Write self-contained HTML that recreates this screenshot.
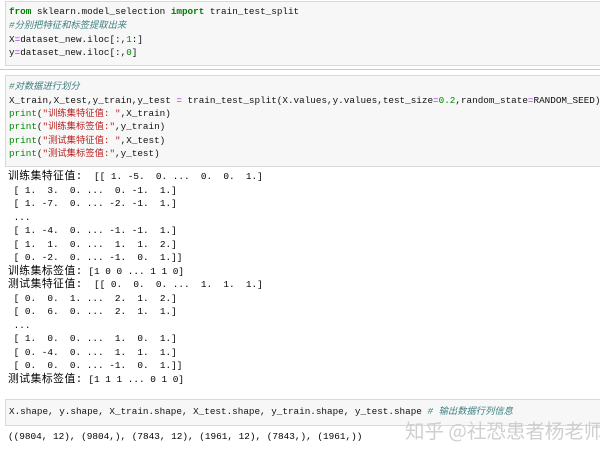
<!DOCTYPE html>
<html><head><meta charset="utf-8"><style>
body{margin:0;width:600px;height:455px;background:#fff;position:relative;overflow:hidden;font-family:"Liberation Mono","Noto Sans CJK SC",monospace;font-size:9.3px;color:#111}
.box{position:absolute;left:5px;right:-2px;background:#f7f7f7;border:1px solid #d9d9d9}
.l{position:absolute;left:9px;white-space:pre;line-height:13px}
.o{position:absolute;left:8px;white-space:pre;line-height:13px;height:13px;font-size:9.4px;color:#000}
.o b{font-weight:normal;font-size:10.8px;letter-spacing:0.5px;line-height:13px}
.k{color:#008000;font-weight:bold}.c{color:#408080;font-style:italic}.s{color:#ba2121}.n{color:#080}.g{color:#a2f}
</style></head><body>
<div class="box" style="top:1px;height:63px"></div>
<div style="position:absolute;left:0;right:0;top:69px;border-top:1px solid #ccc"></div>
<div class="box" style="top:75px;height:90px"></div>
<div class="l" style="top:5px"><span class="k">from</span> sklearn.model_selection <span class="k">import</span> train_test_split</div>
<div class="l" style="top:19px"><span class="c">#分别把特征和标签提取出来</span></div>
<div class="l" style="top:33px">X<span class="g">=</span>dataset_new.iloc[:,<span class="n">1</span>:]</div>
<div class="l" style="top:46px">y<span class="g">=</span>dataset_new.iloc[:,<span class="n">0</span>]</div>
<div class="l" style="top:80px"><span class="c">#对数据进行划分</span></div>
<div class="l" style="top:94px">X_train,X_test,y_train,y_test <span class="g">=</span> train_test_split(X.values,y.values,test_size<span class="g">=</span><span class="n">0.2</span>,random_state<span class="g">=</span>RANDOM_SEED)</div>
<div class="l" style="top:107px"><span class="n">print</span>(<span class="s">"训练集特征值: "</span>,X_train)</div>
<div class="l" style="top:120px"><span class="n">print</span>(<span class="s">"训练集标签值:"</span>,y_train)</div>
<div class="l" style="top:134px"><span class="n">print</span>(<span class="s">"测试集特征值: "</span>,X_test)</div>
<div class="l" style="top:147px"><span class="n">print</span>(<span class="s">"测试集标签值:"</span>,y_test)</div>
<div class="o" style="top:170px"><b>训练集特征值:</b>  [[ 1. -5.  0. ...  0.  0.  1.]</div>
<div class="o" style="top:183.5px"> [ 1.  3.  0. ...  0. -1.  1.]</div>
<div class="o" style="top:197px"> [ 1. -7.  0. ... -2. -1.  1.]</div>
<div class="o" style="top:210.5px"> ...</div>
<div class="o" style="top:224px"> [ 1. -4.  0. ... -1. -1.  1.]</div>
<div class="o" style="top:237.5px"> [ 1.  1.  0. ...  1.  1.  2.]</div>
<div class="o" style="top:251px"> [ 0. -2.  0. ... -1.  0.  1.]]</div>
<div class="o" style="top:264.5px"><b>训练集标签值:</b> [1 0 0 ... 1 1 0]</div>
<div class="o" style="top:278px"><b>测试集特征值:</b>  [[ 0.  0.  0. ...  1.  1.  1.]</div>
<div class="o" style="top:291.5px"> [ 0.  0.  1. ...  2.  1.  2.]</div>
<div class="o" style="top:305px"> [ 0.  6.  0. ...  2.  1.  1.]</div>
<div class="o" style="top:318.5px"> ...</div>
<div class="o" style="top:332px"> [ 1.  0.  0. ...  1.  0.  1.]</div>
<div class="o" style="top:345.5px"> [ 0. -4.  0. ...  1.  1.  1.]</div>
<div class="o" style="top:359px"> [ 0.  0.  0. ... -1.  0.  1.]]</div>
<div class="o" style="top:372.5px"><b>测试集标签值:</b> [1 1 1 ... 0 1 0]</div>
<div class="box" style="top:399px;height:25px"></div>
<div class="l" style="top:405px">X.shape, y.shape, X_train.shape, X_test.shape, y_train.shape, y_test.shape <span class="c"># 输出数据行列信息</span></div>
<div class="o" style="top:430px">((9804, 12), (9804,), (7843, 12), (1961, 12), (7843,), (1961,))</div>
<div style="position:absolute;left:405px;top:415px;font-family:'Noto Sans CJK SC',sans-serif;font-size:19.5px;color:#cfcfcf;white-space:nowrap">知乎 @社恐患者杨老师</div>
</body></html>
